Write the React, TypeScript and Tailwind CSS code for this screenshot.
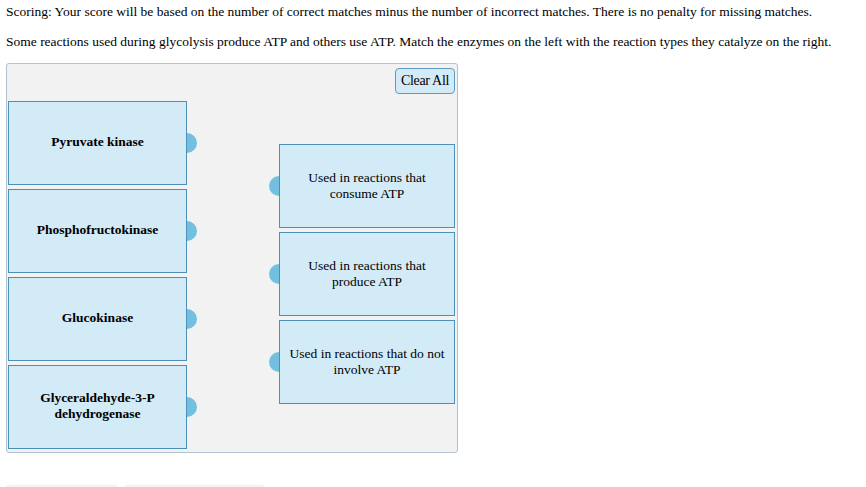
import React from "react";

const enzymes = [
  ["Pyruvate kinase"],
  ["Phosphofructokinase"],
  ["Glucokinase"],
  ["Glyceraldehyde-3-P", "dehydrogenase"],
];

const reactionTypes = [
  ["Used in reactions that", "consume ATP"],
  ["Used in reactions that", "produce ATP"],
  ["Used in reactions that do not", "involve ATP"],
];

function Lines({ lines }: { lines: string[] }) {
  return (
    <>
      {lines.map((l) => (
        <span key={l} className="block">
          {l}
        </span>
      ))}
    </>
  );
}

export default function App() {
  return (
    <div
      className="bg-white text-black text-[13.5px] leading-[15px] pl-[6px] pt-[4px] h-[487px] overflow-hidden"
      style={{ fontFamily: '"Liberation Serif", "Times New Roman", serif' }}
    >
      <p>
        Scoring: Your score will be based on the number of correct matches minus the number of incorrect matches. There
        is no penalty for missing matches.
      </p>
      <p className="mt-[15px]">
        Some reactions used during glycolysis produce ATP and others use ATP. Match the enzymes on the left with the
        reaction types they catalyze on the right.
      </p>

      {/* matching board */}
      <div className="mt-[14px] w-[452px] h-[390px] bg-[#f2f2f2] border border-[#b3c2d1] rounded-[3px] px-px">
        <div className="flex justify-end pt-[4px] pr-px">
          <button className="h-[26px] w-[60px] bg-[#d4eaf7] border border-[#5f9cc5] rounded-[4px] text-[14px] leading-none tracking-[-0.3px]">
            Clear All
          </button>
        </div>

        <div className="flex justify-between mt-[7px]">
          {/* enzymes */}
          <div className="flex flex-col gap-[4px]">
            {enzymes.map((lines, i) => (
              <div key={i} className="relative">
                <div className="w-[179px] h-[84px] bg-[#d3eaf7] border border-[#4a90b9] flex items-center justify-center text-center font-bold leading-[16px] pb-[2px]">
                  <div>
                    <Lines lines={lines} />
                  </div>
                </div>
                <span className="absolute left-[179px] top-[32px] w-[10px] h-[20px] rounded-r-full bg-[#72bfe0]" />
              </div>
            ))}
          </div>

          {/* reaction types */}
          <div className="flex flex-col gap-[4px] mt-[43px] mr-px">
            {reactionTypes.map((lines, i) => (
              <div key={i} className="relative">
                <span className="absolute right-[176px] top-[32px] w-[10px] h-[20px] rounded-l-full bg-[#72bfe0]" />
                <div className="w-[176px] h-[84px] bg-[#d3eaf7] border border-[#4a90b9] flex items-center justify-center text-center leading-[16px]">
                  <div>
                    <Lines lines={lines} />
                  </div>
                </div>
              </div>
            ))}
          </div>
        </div>
      </div>

      <div className="flex gap-[8px] mt-[33px]">
        <div className="w-[111px] h-[30px] rounded-[3px] bg-[#f4f4f4] shadow-[0_0_2px_#ccc]" />
        <div className="w-[139px] h-[30px] rounded-[3px] bg-[#f4f4f4] shadow-[0_0_2px_#ccc]" />
      </div>
    </div>
  );
}
